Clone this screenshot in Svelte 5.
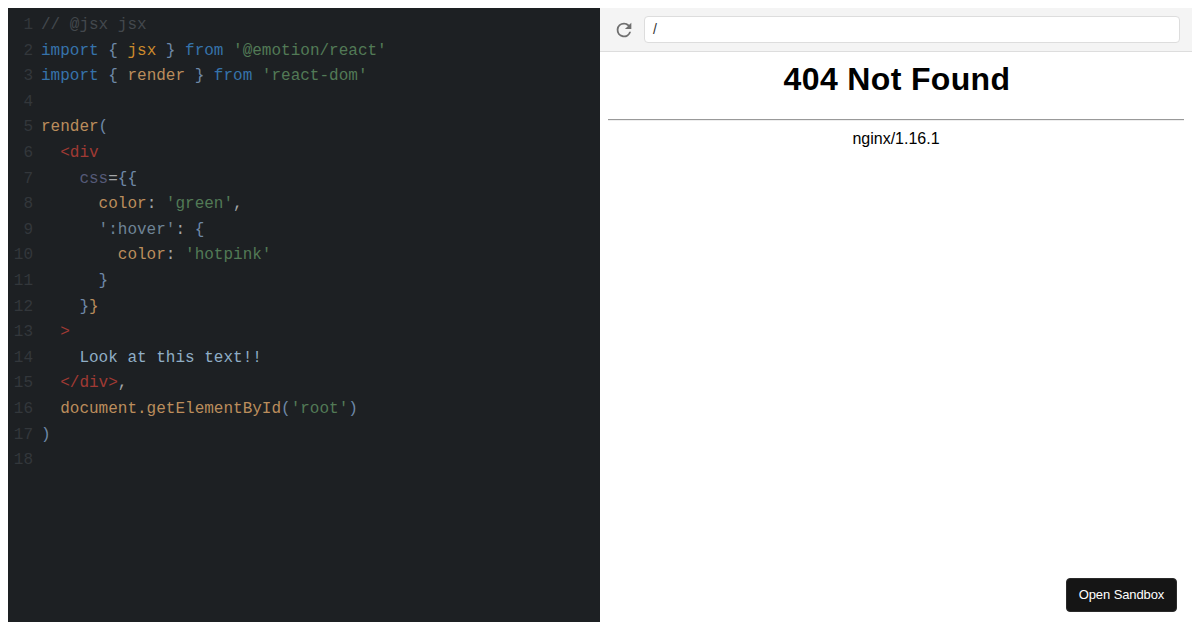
<script>
  const lines = [
    [['c', '// @jsx jsx']],
    [['k', 'import'], ['p', ' { '], ['j', 'jsx'], ['p', ' } '], ['k', 'from'], ['p', ' '], ['s', "'@emotion/react'"]],
    [['k', 'import'], ['p', ' { '], ['o', 'render'], ['p', ' } '], ['k', 'from'], ['p', ' '], ['s', "'react-dom'"]],
    [],
    [['o', 'render'], ['p', '(']],
    [['p', '  '], ['t', '<div']],
    [['p', '    '], ['a', 'css'], ['w', '='], ['p', '{{']],
    [['p', '      '], ['o', 'color'], ['w', ': '], ['s', "'green'"], ['w', ',']],
    [['p', '      '], ['s2', "':hover'"], ['w', ': '], ['p', '{']],
    [['p', '        '], ['o', 'color'], ['w', ': '], ['s', "'hotpink'"]],
    [['p', '      }']],
    [['p', '    }'], ['o', '}']],
    [['p', '  '], ['t', '>']],
    [['l', '    Look at this text!!']],
    [['p', '  '], ['t', '</div>'], ['w', ',']],
    [['p', '  '], ['o', 'document.getElementById'], ['p', '('], ['s', "'root'"], ['p', ')']],
    [['p', ')']],
    []
  ];
</script>

<div class="root">
  <div class="editor">
    {#each lines as line, i}
      <div class="line">
        <span class="num">{i + 1}</span>
        <span class="code">{#each line as tok}<span class={tok[0]}>{tok[1]}</span>{/each}</span>
      </div>
    {/each}
  </div>
  <div class="preview">
    <div class="bar">
      <svg class="reload" viewBox="0 0 24 24" width="22" height="22" aria-hidden="true">
        <path d="M17.65 6.35A7.95 7.95 0 0 0 12 4a8 8 0 1 0 7.73 10h-2.08A6 6 0 1 1 12 6c1.66 0 3.14.69 4.22 1.78L13 11h7V4l-2.35 2.35z" />
      </svg>
      <div class="url">/</div>
    </div>
    <div class="page">
      <h1>404 Not Found</h1>
      <hr />
      <div class="server">nginx/1.16.1</div>
      <button class="open">Open Sandbox</button>
    </div>
  </div>
</div>

<style>
  :global(body) {
    margin: 8px;
    background: #fff;
    text-rendering: optimizeSpeed;
  }
  .root {
    display: flex;
    height: 614px;
  }
  .editor {
    width: 592px;
    flex: none;
    box-sizing: border-box;
    padding-top: 5px;
    background: #1d2023;
    font-family: "Liberation Mono", monospace;
    font-size: 16px;
    line-height: 25.6px;
    color: #7d90a8;
  }
  .line {
    display: flex;
    height: 25.6px;
  }
  .num {
    width: 25px;
    flex: none;
    text-align: right;
    color: #33373b;
    margin-right: 8px;
  }
  .code {
    white-space: pre;
  }
  .c { color: #43484d; }
  .k { color: #3673ab; }
  .p { color: #6f89a8; }
  .j { color: #cc8a2c; }
  .o { color: #bb8d5c; }
  .s { color: #527a56; }
  .s2 { color: #6f8496; }
  .w { color: #a3a6a8; }
  .t { color: #a03a34; }
  .a { color: #555a78; }
  .l { color: #90aec6; }
  .preview {
    flex: 1;
    display: flex;
    flex-direction: column;
    min-width: 0;
  }
  .bar {
    display: flex;
    align-items: center;
    height: 43px;
    padding: 0 12px 0 13px;
    gap: 9px;
    background: #f4f4f4;
    border-bottom: 1px solid #dddddd;
    flex: none;
  }
  .reload {
    fill: #6f6f6f;
    flex: none;
  }
  .url {
    flex: 1;
    box-sizing: border-box;
    height: 27px;
    padding: 0 8px;
    background: #fff;
    border: 1px solid #dddddd;
    border-radius: 4px;
    font-family: "Liberation Sans", sans-serif;
    font-size: 14px;
    line-height: 25px;
    color: #333;
  }
  .page {
    flex: 1;
    position: relative;
    padding: 8px;
    background: #fff;
    font-family: "Liberation Sans", sans-serif;
    color: #000;
    font-size: 16px;
    text-align: center;
  }
  h1 {
    margin: 0;
    padding: 1px 0 0 2px;
    font-size: 32px;
    line-height: 37px;
    font-weight: bold;
    letter-spacing: 0.35px;
  }
  hr {
    margin: 21px 0 9px;
    border: none;
    border-top: 1px solid #999;
    border-bottom: 1px solid #eee;
  }
  .server {
    line-height: 18px;
  }
  .open {
    position: absolute;
    right: 15px;
    bottom: 10px;
    width: 111px;
    height: 34px;
    padding: 0 0 2px;
    border: 1px solid #2a2a2a;
    border-radius: 4px;
    background: #151515;
    color: #fff;
    font-family: "Liberation Sans", sans-serif;
    font-size: 13px;
    letter-spacing: -0.1px;
    text-rendering: optimizeSpeed;
  }
</style>
